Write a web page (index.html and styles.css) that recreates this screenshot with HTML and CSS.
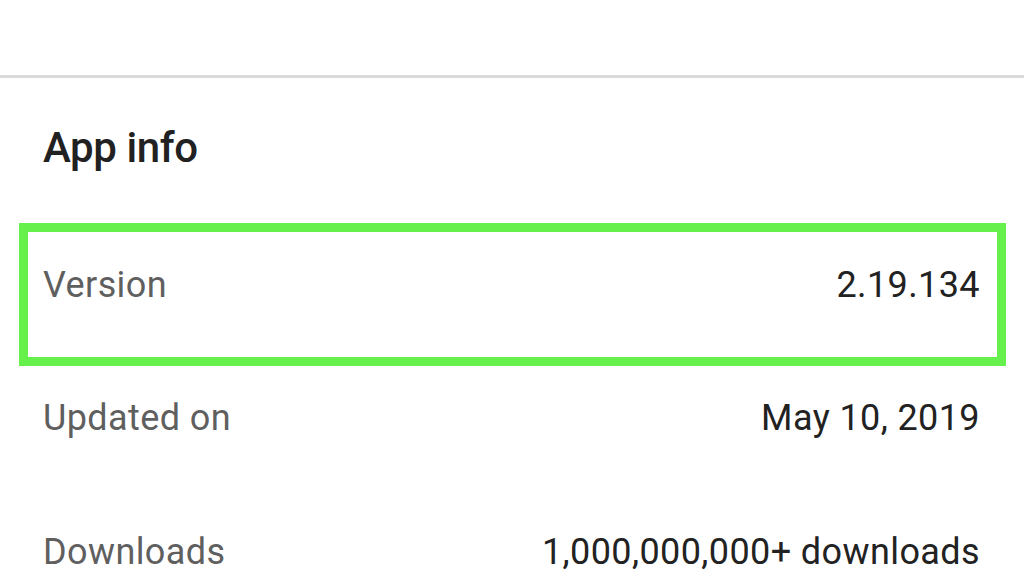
FILE: index.html
```html
<!DOCTYPE html>
<html lang="en">
<head>
<meta charset="utf-8">
<title>App info</title>
<link rel="stylesheet" href="styles.css">
</head>
<body>
  <div class="topbar"></div>
  <div class="divider"></div>
  <main class="content">
    <h2 class="title">App info</h2>
    <div class="rows">
      <div class="row highlighted">
        <span class="label">Version</span>
        <span class="value">2.19.134</span>
      </div>
      <div class="row">
        <span class="label">Updated on</span>
        <span class="value">May 10, 2019</span>
      </div>
      <div class="row">
        <span class="label">Downloads</span>
        <span class="value">1,000,000,000+ downloads</span>
      </div>
    </div>
  </main>
</body>
</html>
```
FILE: styles.css
```css
html, body {
  margin: 0;
  padding: 0;
  background: #ffffff;
  overflow: hidden;
}

body {
  font-family: Roboto, "Liberation Sans", Arial, sans-serif;
  width: 1024px;
  height: 576px;
}

.topbar {
  height: 75px;
}

.divider {
  height: 3px;
  background: #dadada;
}

.content {
  padding-top: 41.7px;
}

.title {
  margin: 0 0 52px 43px;
  font-size: 42px;
  line-height: 56px;
  font-weight: 500;
  letter-spacing: -0.4px;
  color: #212121;
}

.rows {
  display: flex;
  flex-direction: column;
  padding: 0 22.75px 0 23.75px;
}

.row {
  display: flex;
  justify-content: space-between;
  align-items: baseline;
  padding: 35.85px 21.25px 55.65px 19.25px;
  font-size: 36px;
  line-height: 42px;
  letter-spacing: 0.4px;
}

.row:last-child {
  padding-bottom: 0;
}

.row.highlighted {
  outline: 9px solid #65f04b;
  outline-offset: -4.25px;
}

.label {
  color: #5f5f5f;
}

.value {
  color: #222222;
}
```
